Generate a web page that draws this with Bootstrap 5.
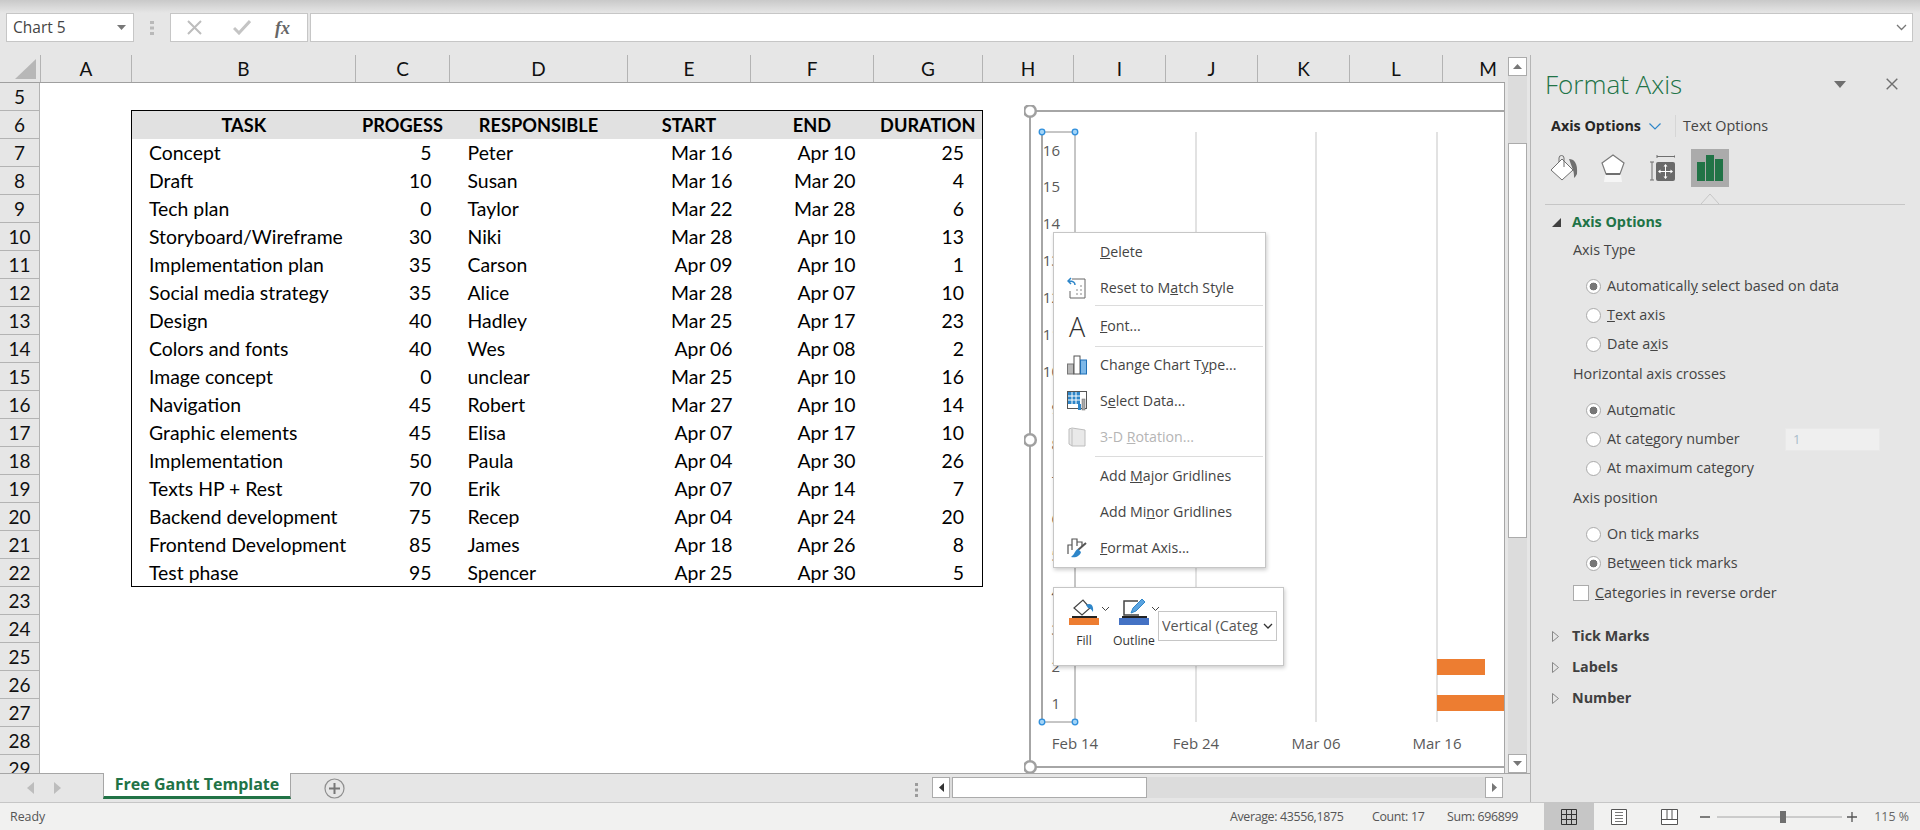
<!doctype html>
<html lang="en">
<head>
<meta charset="utf-8">
<title>Format Axis</title>
<link href="https://cdn.jsdelivr.net/npm/bootstrap@5.3.0/dist/css/bootstrap.min.css" rel="stylesheet">
<style>
html,body{height:830px;overflow:hidden}
body{background:#e6e6e6;font-family:"Open Sans","Liberation Sans",sans-serif;color:#444}
.xl-app{width:1920px;height:830px}
.xl-fbar{height:55px;background:linear-gradient(#c9c9c9 0,#e6e6e6 13px);flex:none;padding-top:13px}
.xl-name{width:128px;height:29px;margin-left:6px;background:#fff;border:1px solid #c6c6c6;padding:0 7px 0 6px;font-size:15.5px;color:#444}
.xl-dots{width:36px;height:29px;justify-content:center}
.xl-fxbox{width:138px;height:29px;margin-left:0;background:#fff;border:1px solid #c6c6c6}
.xl-fx{font:italic 700 18px "Liberation Serif",serif;color:#666;line-height:1}
.xl-input{width:1603px;height:29px;margin-left:2px;background:#fff;border:1px solid #c6c6c6;padding-right:5px}
.xl-sheetwrap{width:1531px;border-right:1px solid #b5b5b5;flex:none}
.xl-top{height:718px}
.xl-grid{width:1505px;flex:none}
.xl-cols{height:28px;border-bottom:1px solid #9f9f9f;flex:none;overflow:hidden;font:19px/27px Lato,sans-serif;color:#111}
.xl-col{flex:none;text-align:center;border-right:1px solid #b3b3b3}
.xl-corner{width:41px;flex:none;border-right:1px solid #b3b3b3;padding:4px 0 0 15px;line-height:0}
.xl-body{height:690px;overflow:hidden}
.xl-rows{width:40px;flex:none;border-right:1px solid #b3b3b3;font:19px/27px Lato,sans-serif;color:#111;text-align:center}
.xl-rows>div{height:28px;border-bottom:1px solid #b3b3b3}
.xl-canvas{flex:1 1 auto;background:#fff;padding:27px 0 0 91px;border-right:1px solid #a6a6a6;overflow:hidden}
.xl-gantt{width:851px;table-layout:fixed;border:1px solid #000;margin:0;--bs-table-bg:transparent}
.xl-gantt td,.xl-gantt th{height:28px;padding:0 18px;font:19.4px/27px Lato,sans-serif;color:#000;white-space:nowrap;border:0;vertical-align:middle}
.xl-gantt td:first-child{padding-left:17px}
.xl-gantt th{font-weight:700;font-size:18.2px;line-height:25px;background:#e1e1e1;padding:2px 0 0;text-align:center}
.xl-chart{position:absolute;left:984px;top:22px;width:480px;height:668px;background:#fff;display:block}
.xl-chart text{font-family:"Open Sans",sans-serif;font-size:15px;fill:#595959}
.xl-menu{left:1013px;top:149px;width:213px;padding:1px 0;border-radius:0;border:1px solid #c6c6c6;box-shadow:1px 2px 4px rgba(0,0,0,.2);font-size:14.2px;margin:0;--bs-dropdown-min-width:0}
.xl-item{height:36px;padding:0;color:#444;display:flex;align-items:center}
.xl-item.xl-short{height:35px}
.xl-item.xl-tall{height:40px}
.xl-item.disabled{color:#b5b5b5}
.xl-mi{width:46px;flex:none;display:flex;justify-content:center;align-items:center;height:100%}
.xl-a{font-size:27px;font-weight:300;line-height:1;color:#333}
.xl-sep{height:1px;margin:0 2px 0 41px;background:#dcdcdc}
.xl-mini{position:absolute;left:1013px;top:504px;width:231px;height:79px;background:#fff;border:1px solid #c6c6c6;box-shadow:1px 2px 4px rgba(0,0,0,.2);padding:10px 0 0 15px;font-size:12.2px;color:#333}
.xl-mb{width:50px;flex:none}
.xl-mb span{display:flex;justify-content:center;width:30px;margin-top:7px;white-space:nowrap}
.xl-select{width:119px;height:30px;border:1px solid #c6c6c6;margin:13px 0 0 -11px;padding:0 3px;font-size:14.4px;color:#555;white-space:nowrap}
.xl-select span{width:97px;overflow:hidden;flex:none}
.xl-vs{width:19px;margin:2px 0 0 3px;background:#dcdcdc}
.xl-sb{background:#fff;border:1px solid #ababab;flex:none}
.xl-strip{height:29px;border-top:1px solid #a6a6a6;flex:none}
.xl-nav{width:103px;flex:none;padding-left:27px;gap:20px}
.xl-tab{width:188px;height:26px;margin-top:-1px;background:#fff;border:1px solid #a6a6a6;border-top:0;border-bottom:3px solid #217346;flex:none;color:#217346;font-weight:700;font-size:16px;text-align:center;line-height:23px}
.xl-hs{width:571px;height:21px;margin:3px 0 0 13px;background:#dcdcdc;flex:none}
.xl-pane{flex:1 1 auto;padding-left:14px;font-size:14.35px;color:#444}
.xl-title{height:40px;margin-top:9px;font-size:26px;font-weight:300;color:#217346;line-height:40px;padding-right:22px}
.xl-tabs{height:24px;margin-top:10px;padding-left:6px;line-height:24px}
.xl-tabsep{width:1px;height:22px;background:#d6d6d6;margin:0 7px 0 14px}
.xl-icons{height:38px;margin-top:11px}
.xl-ic{width:38px;height:38px;display:flex;align-items:center;justify-content:center;flex:none;margin-right:11px}
.xl-ic:nth-child(3){margin-right:10px}
.xl-ic.xl-on{background:#ababab}
.xl-rule{position:relative;width:360px;height:1px;background:#c6c6c6;margin-top:17px}
.xl-notch{position:absolute;left:156px;top:-11px;line-height:0}
.xl-lab{height:24px;line-height:24px;margin-left:28px;white-space:nowrap}
.xl-head{height:24px;line-height:24px;font-weight:700;white-space:nowrap;color:#404040}
.xl-head svg{margin:0 11px 0 7px;flex:none}
.xl-green{color:#217346}
.xl-radio{height:29px;margin:0 0 0 41px;padding:0;display:flex;align-items:center;white-space:nowrap}
.xl-radio .form-check-input{width:15px;height:15px;margin:0 6px 0 0;float:none;border:1px solid #aaa;background-color:#fff;flex:none;opacity:1}
.xl-radio .form-check-input:checked{background-color:#fff;border-color:#aaa;background-image:radial-gradient(circle,#777 0 3.6px,transparent 4.2px)}
.xl-num{width:95px;height:23px;background:#efefef;border:1px solid #e9e9e9;color:#a9bccb;font-size:13px;padding-left:7px;line-height:21px;margin-left:37px}
.xl-cb{height:24px;margin-left:28px;display:flex;align-items:center;white-space:nowrap}
.xl-box{width:16px;height:16px;background:#fff;border:1px solid #ababab;margin-right:6px;flex:none}
.xl-status{height:28px;background:#f1f1f0;border-top:1px solid #c6c6c6;flex:none;font-size:12.4px;color:#555;line-height:27px;padding:0 11px 0 10px;white-space:nowrap}
.xl-stat{flex:none;letter-spacing:-.35px}
.xl-sview{width:50px;height:27px;display:flex;align-items:center;justify-content:center;flex:none}
.xl-sview.xl-on{background:#c6c6c6}
</style>
</head>
<body>
<div class="xl-app d-flex flex-column">

  <!-- formula bar -->
  <div class="xl-fbar d-flex">
    <div class="xl-name d-flex align-items-center justify-content-between">Chart 5
      <svg width="9" height="5" viewBox="0 0 9 5"><path d="M0 0h9L4.500 5z" fill="#777"/></svg>
    </div>
    <div class="xl-dots d-flex align-items-center">
      <svg width="4" height="14" viewBox="0 0 4 14"><path d="M0 0h4v3H0zM0 5.500h4v3H0zM0 11h4v3H0z" fill="#b9b9b9"/></svg>
    </div>
    <div class="xl-fxbox d-flex align-items-center">
      <svg class="ms-3" width="15" height="15" viewBox="0 0 15 15"><path d="M1 1l13 13M14 1L1 14" stroke="#bdbdbd" stroke-width="2" fill="none"/></svg>
      <svg style="margin-left:31px" width="18" height="15" viewBox="0 0 18 15"><path d="M1 8l5 5L17 1" stroke="#c4c4c4" stroke-width="3" fill="none"/></svg>
      <span class="xl-fx" style="margin-left:24px">fx</span>
    </div>
    <div class="xl-input d-flex align-items-center justify-content-end">
      <svg width="11" height="7" viewBox="0 0 11 7"><path d="M1 1l4.500 4.500L10 1" stroke="#777" stroke-width="1.300" fill="none"/></svg>
    </div>
  </div>

  <!-- main -->
  <div class="d-flex flex-grow-1" style="height:747px">
    <div class="xl-sheetwrap d-flex flex-column">
      <div class="xl-top d-flex">
        <div class="xl-grid d-flex flex-column">
          <div class="xl-cols d-flex">
            <div class="xl-corner"><svg width="21" height="20" viewBox="0 0 21 20"><path d="M0 20L21 0v20z" fill="#b7b7b7"/></svg></div>
            <div class="xl-col" style="width:91px">A</div>
            <div class="xl-col" style="width:224px">B</div>
            <div class="xl-col" style="width:94px">C</div>
            <div class="xl-col" style="width:178px">D</div>
            <div class="xl-col" style="width:123px">E</div>
            <div class="xl-col" style="width:123px">F</div>
            <div class="xl-col" style="width:109px">G</div>
            <div class="xl-col" style="width:91px">H</div>
            <div class="xl-col" style="width:92px">I</div>
            <div class="xl-col" style="width:92px">J</div>
            <div class="xl-col" style="width:92px">K</div>
            <div class="xl-col" style="width:93px">L</div>
            <div class="xl-col" style="width:90px;border:0">M</div>
          </div>
          <div class="xl-body d-flex">
            <div class="xl-rows">
              <div>5</div><div>6</div><div>7</div><div>8</div><div>9</div><div>10</div><div>11</div><div>12</div><div>13</div><div>14</div><div>15</div><div>16</div><div>17</div><div>18</div><div>19</div><div>20</div><div>21</div><div>22</div><div>23</div><div>24</div><div>25</div><div>26</div><div>27</div><div>28</div><div>29</div>
            </div>
            <div class="xl-canvas position-relative">
              <table class="table table-borderless xl-gantt">
                <colgroup><col style="width:224px"><col style="width:94px"><col style="width:178px"><col style="width:123px"><col style="width:123px"><col style="width:109px"></colgroup>
                <thead><tr><th>TASK</th><th>PROGESS</th><th>RESPONSIBLE</th><th>START</th><th>END</th><th>DURATION</th></tr></thead>
                <tbody>
                  <tr><td>Concept</td><td class="text-end">5</td><td>Peter</td><td class="text-end">Mar 16</td><td class="text-end">Apr 10</td><td class="text-end">25</td></tr>
                  <tr><td>Draft</td><td class="text-end">10</td><td>Susan</td><td class="text-end">Mar 16</td><td class="text-end">Mar 20</td><td class="text-end">4</td></tr>
                  <tr><td>Tech plan</td><td class="text-end">0</td><td>Taylor</td><td class="text-end">Mar 22</td><td class="text-end">Mar 28</td><td class="text-end">6</td></tr>
                  <tr><td>Storyboard/Wireframe</td><td class="text-end">30</td><td>Niki</td><td class="text-end">Mar 28</td><td class="text-end">Apr 10</td><td class="text-end">13</td></tr>
                  <tr><td>Implementation plan</td><td class="text-end">35</td><td>Carson</td><td class="text-end">Apr 09</td><td class="text-end">Apr 10</td><td class="text-end">1</td></tr>
                  <tr><td>Social media strategy</td><td class="text-end">35</td><td>Alice</td><td class="text-end">Mar 28</td><td class="text-end">Apr 07</td><td class="text-end">10</td></tr>
                  <tr><td>Design</td><td class="text-end">40</td><td>Hadley</td><td class="text-end">Mar 25</td><td class="text-end">Apr 17</td><td class="text-end">23</td></tr>
                  <tr><td>Colors and fonts</td><td class="text-end">40</td><td>Wes</td><td class="text-end">Apr 06</td><td class="text-end">Apr 08</td><td class="text-end">2</td></tr>
                  <tr><td>Image concept</td><td class="text-end">0</td><td>unclear</td><td class="text-end">Mar 25</td><td class="text-end">Apr 10</td><td class="text-end">16</td></tr>
                  <tr><td>Navigation</td><td class="text-end">45</td><td>Robert</td><td class="text-end">Mar 27</td><td class="text-end">Apr 10</td><td class="text-end">14</td></tr>
                  <tr><td>Graphic elements</td><td class="text-end">45</td><td>Elisa</td><td class="text-end">Apr 07</td><td class="text-end">Apr 17</td><td class="text-end">10</td></tr>
                  <tr><td>Implementation</td><td class="text-end">50</td><td>Paula</td><td class="text-end">Apr 04</td><td class="text-end">Apr 30</td><td class="text-end">26</td></tr>
                  <tr><td>Texts HP + Rest</td><td class="text-end">70</td><td>Erik</td><td class="text-end">Apr 07</td><td class="text-end">Apr 14</td><td class="text-end">7</td></tr>
                  <tr><td>Backend development</td><td class="text-end">75</td><td>Recep</td><td class="text-end">Apr 04</td><td class="text-end">Apr 24</td><td class="text-end">20</td></tr>
                  <tr><td>Frontend Development</td><td class="text-end">85</td><td>James</td><td class="text-end">Apr 18</td><td class="text-end">Apr 26</td><td class="text-end">8</td></tr>
                  <tr><td>Test phase</td><td class="text-end">95</td><td>Spencer</td><td class="text-end">Apr 25</td><td class="text-end">Apr 30</td><td class="text-end">5</td></tr>
                </tbody>
              </table>

              <!-- floating chart -->
              <svg class="xl-chart" viewBox="1024 105 480 668" aria-label="Gantt chart">
                <path d="M1196 132V722M1316 132V722M1437 132V722" stroke="#d9d9d9" stroke-width="1.500" fill="none"/>
                <rect x="1437" y="659" width="48" height="16" fill="#ed7d31"/>
                <rect x="1437" y="695" width="67" height="16" fill="#ed7d31"/>
                <path d="M1504 111H1030V767H1504" stroke="#a6a6a6" stroke-width="2" fill="none"/>
                <path d="M1075 132V722M1042 132H1075M1042 722H1075" stroke="#8c8c8c" stroke-width="1" fill="none"/>
                <path d="M1042 132V722" stroke="#a6a6a6" stroke-width="2" fill="none"/>
                <g text-anchor="end">
                  <text x="1060" y="155.500">16</text><text x="1060" y="192">15</text><text x="1060" y="229">14</text><text x="1060" y="266">13</text><text x="1060" y="303">12</text><text x="1060" y="340">11</text><text x="1060" y="377">10</text><text x="1060" y="414">9</text><text x="1060" y="450">8</text><text x="1060" y="487">7</text><text x="1060" y="524">6</text><text x="1060" y="561">5</text><text x="1060" y="598">4</text><text x="1060" y="635">3</text><text x="1060" y="672">2</text><text x="1060" y="708.500">1</text>
                </g>
                <g text-anchor="middle">
                  <text x="1075" y="749">Feb 14</text><text x="1196" y="749">Feb 24</text><text x="1316" y="749">Mar 06</text><text x="1437" y="749">Mar 16</text>
                </g>
                <g fill="#a3d4f7" stroke="#2f8fdc" stroke-width="1.300">
                  <circle cx="1042" cy="132" r="2.800"/><circle cx="1075" cy="132" r="2.800"/><circle cx="1042" cy="722" r="2.800"/><circle cx="1075" cy="722" r="2.800"/>
                </g>
                <g fill="#fff" stroke="#a0a0a0" stroke-width="2.500">
                  <circle cx="1030" cy="111" r="5.800"/><circle cx="1030" cy="440" r="5.800"/><circle cx="1030" cy="767" r="5.800"/>
                </g>
              </svg>

              <!-- context menu -->
              <div class="dropdown-menu show xl-menu">
                <a class="dropdown-item xl-item" href="#"><span class="xl-mi"></span><span><u>D</u>elete</span></a>
                <a class="dropdown-item xl-item xl-short" href="#"><span class="xl-mi">
                  <svg width="20" height="22" viewBox="0 0 20 22"><path d="M5 2h13v19H3v-7" fill="#fff" stroke="#666"/><path d="M9 13h2M13 13h2M9 17h2M13 9h2M13 17h2" stroke="#888"/><path d="M8 8c0-3-2-4-6-4M4 1L1 4l3 3" stroke="#2e86c9" stroke-width="1.500" fill="none"/></svg></span><span>Reset to M<u>a</u>tch Style</span></a>
                <div class="xl-sep"></div>
                <a class="dropdown-item xl-item xl-tall" href="#"><span class="xl-mi"><span class="xl-a">A</span></span><span><u>F</u>ont...</span></a>
                <div class="xl-sep"></div>
                <a class="dropdown-item xl-item" href="#"><span class="xl-mi">
                  <svg width="20" height="20" viewBox="0 0 20 20"><rect x=".5" y="9" width="6" height="10" fill="#b8b8b8" stroke="#777"/><rect x="7" y="1" width="6" height="18" fill="#fff" stroke="#555"/><rect x="13.500" y="5" width="6" height="14" fill="#7db8e8" stroke="#1f6fb5"/></svg></span><span>Change Chart T<u>y</u>pe...</span></a>
                <a class="dropdown-item xl-item" href="#"><span class="xl-mi">
                  <svg width="20" height="20" viewBox="0 0 20 20"><rect x=".5" y=".5" width="19" height="17" fill="#fff" stroke="#555"/><path d="M1 1h12v12H1z" fill="#2e86c9"/><path d="M1 5h12M1 9h12M5 1v12M9 1v12" stroke="#fff"/><rect x="11" y="13" width="3" height="6" fill="#2e86c9"/><rect x="15" y="8" width="3" height="11" fill="#aaa" stroke="#666" stroke-width=".5"/></svg></span><span>S<u>e</u>lect Data...</span></a>
                <a class="dropdown-item xl-item disabled" href="#"><span class="xl-mi">
                  <svg width="18" height="20" viewBox="0 0 18 20"><path d="M1 2l3-1 13 2v16H4l-3-2z" fill="#e9e9e9" stroke="#bdbdbd"/><path d="M4 2v17" stroke="#bdbdbd"/></svg></span><span>3-D <u>R</u>otation...</span></a>
                <div class="xl-sep" style="margin-top:1px;margin-bottom:1px"></div>
                <a class="dropdown-item xl-item" href="#"><span class="xl-mi"></span><span>Add <u>M</u>ajor Gridlines</span></a>
                <a class="dropdown-item xl-item" href="#"><span class="xl-mi"></span><span>Add Mi<u>n</u>or Gridlines</span></a>
                <a class="dropdown-item xl-item" href="#"><span class="xl-mi">
                  <svg width="20" height="20" viewBox="0 0 20 20"><path d="M1 16V7h4M5 12V1h5v7M10 4h5v4" fill="none" stroke="#555" stroke-width="1.200"/><path d="M19 5l-8 7" stroke="#555" stroke-width="2"/><path d="M11 11c-3 1-3 5-7 8 5 1 9-1 10-5z" fill="#2e86c9"/></svg></span><span><u>F</u>ormat Axis...</span></a>
              </div>

              <!-- mini toolbar -->
              <div class="xl-mini d-flex">
                <div class="xl-mb">
                  <svg width="42" height="27" viewBox="0 0 42 27"><path d="M5 10l9-8 7 8-8 7z" fill="#fff" stroke="#444" stroke-width="1.200"/><path d="M17 7c5-3 8 1 7 7-2-3-3-4-5-4z" fill="#2e86c9"/><path d="M3 19h25" stroke="#222" stroke-width="2"/><rect y="20" width="30" height="7" fill="#ed7d31"/><path d="M33 9l3.500 3.500L40 9" stroke="#444" fill="none"/></svg>
                  <span>Fill</span>
                </div>
                <div class="xl-mb">
                  <svg width="42" height="27" viewBox="0 0 42 27"><path d="M19 3H5v14h15" fill="#fff" stroke="#444" stroke-width="1.500"/><path d="M12 15l2-5 9-9 3 3-9 9z" fill="#5aa3e0" stroke="#2e86c9"/><path d="M3 19h25" stroke="#222" stroke-width="2"/><rect y="20" width="30" height="7" fill="#4472c4"/><path d="M33 9l3.500 3.500L40 9" stroke="#444" fill="none"/></svg>
                  <span>Outline</span>
                </div>
                <div class="xl-select d-flex align-items-center justify-content-between"><span>Vertical (Categ</span>
                  <svg width="10" height="6" viewBox="0 0 10 6"><path d="M1 1l4 4 4-4" stroke="#333" stroke-width="1.300" fill="none"/></svg>
                </div>
              </div>
            </div>
          </div>
        </div>
        <!-- vertical scrollbar -->
        <div class="xl-vs d-flex flex-column">
          <div class="xl-sb d-flex align-items-center justify-content-center" style="height:19px"><svg width="9" height="5" viewBox="0 0 9 5"><path d="M0 5h9L4.500 0z" fill="#777"/></svg></div>
          <div style="height:67px"></div>
          <div class="xl-sb" style="height:395px"></div>
          <div class="flex-grow-1"></div>
          <div class="xl-sb d-flex align-items-center justify-content-center" style="height:19px"><svg width="9" height="5" viewBox="0 0 9 5"><path d="M0 0h9L4.500 5z" fill="#777"/></svg></div>
        </div>
      </div>
      <!-- sheet tabs -->
      <div class="xl-strip d-flex">
        <div class="xl-nav d-flex align-items-center">
          <svg width="7" height="12" viewBox="0 0 7 12"><path d="M7 0v12L0 6z" fill="#bdbdbd"/></svg>
          <svg width="7" height="12" viewBox="0 0 7 12"><path d="M0 0v12l7-6z" fill="#bdbdbd"/></svg>
        </div>
        <div class="xl-tab">Free Gantt Template</div>
        <svg style="margin:4px 0 0 33px;flex:none" width="21" height="21" viewBox="0 0 21 21"><circle cx="10.500" cy="10.500" r="9.500" fill="none" stroke="#8f8f8f" stroke-width="1.200"/><path d="M10.500 5v11M5 10.500h11" stroke="#777" stroke-width="2"/></svg>
        <svg style="margin:9px 0 0 570px;flex:none" width="4" height="14" viewBox="0 0 4 14"><path d="M0 0h3v3H0zM0 5.500h3v3H0zM0 11h3v3H0z" fill="#9c9c9c"/></svg>
        <div class="xl-hs d-flex">
          <div class="xl-sb d-flex align-items-center justify-content-center" style="width:18px"><svg width="5" height="9" viewBox="0 0 5 9"><path d="M5 0v9L0 4.500z" fill="#333"/></svg></div>
          <div class="xl-sb" style="width:195px;margin-left:2px"></div>
          <div class="flex-grow-1"></div>
          <div class="xl-sb d-flex align-items-center justify-content-center" style="width:18px"><svg width="5" height="9" viewBox="0 0 5 9"><path d="M0 0v9l5-4.500z" fill="#777"/></svg></div>
        </div>
      </div>
    </div>

    <!-- format pane -->
    <aside class="xl-pane">
      <div class="xl-title d-flex justify-content-between align-items-center"><span>Format Axis</span>
        <span class="d-flex align-items-center" style="gap:40px">
          <svg width="12" height="7" viewBox="0 0 12 7"><path d="M0 0h12L6 7z" fill="#6f6f6f"/></svg>
          <svg width="12" height="12" viewBox="0 0 12 12"><path d="M.7.7l10.600 10.600M11.300.7L.7 11.300" stroke="#6f6f6f" stroke-width="1.400"/></svg>
        </span>
      </div>
      <div class="xl-tabs d-flex align-items-center">
        <strong class="text-nowrap" style="color:#262626">Axis Options</strong>
        <svg class="ms-2" width="12" height="7" viewBox="0 0 12 7" style="margin-left:9px"><path d="M.5.5L6 6l5.500-5.500" stroke="#2e86c9" stroke-width="1.200" fill="none"/></svg>
        <span class="xl-tabsep"></span><span class="text-nowrap">Text Options</span>
      </div>
      <div class="xl-icons d-flex">
        <div class="xl-ic">
          <svg width="28" height="26" viewBox="0 0 28 26"><path d="M1 15L12 4l11 11-11 10z" fill="#fff" stroke="#6f6f6f"/><path d="M9 7V3a2.500 2.500 0 015 0v9" fill="none" stroke="#6f6f6f"/><path d="M19 4c5 0 9 4 8 15-1 2-2 3-3 4 0-3 0-5-1-8z" fill="#6f6f6f"/></svg>
        </div>
        <div class="xl-ic">
          <svg width="24" height="28" viewBox="0 0 24 28"><path d="M12 1l11 8-4 11H5L1 9z" fill="#fff" stroke="#7a7a7a" stroke-width="1.200"/><path d="M5 20h14" stroke="#6f6f6f" stroke-width="2"/><path d="M4 21h16l1 7H3z" fill="#f6f6f6"/></svg>
        </div>
        <div class="xl-ic">
          <svg width="26" height="28" viewBox="0 0 26 28"><path d="M8 1v3M26 1v3M8 2.500h18M1 8h4M1 26h4M3 8v18" fill="none" stroke="#6f6f6f"/><rect x="7" y="8" width="19" height="19" rx="2" fill="#6a6a6a"/><path d="M16.500 11v13M10 17.500h13" stroke="#fff"/><path d="M16.500 10l-2 2.500h4zM16.500 25l-2-2.500h4zM9 17.500l2.500-2v4zM24 17.500l-2.500-2v4z" fill="#fff"/></svg>
        </div>
        <div class="xl-ic xl-on">
          <svg width="26" height="26" viewBox="0 0 26 26"><path d="M0 7h8v19H0zM9 0h8v26H9zM18 4h8v22h-8z" fill="#217346"/></svg>
        </div>
      </div>
      <div class="xl-rule"><span class="xl-notch"><svg width="18" height="11" viewBox="0 0 18 11"><path d="M0 11L9 1l9 10" fill="#e6e6e6" stroke="#c6c6c6"/></svg></span></div>

      <div class="xl-head xl-green d-flex align-items-center" style="margin-top:5px"><svg width="9" height="9" viewBox="0 0 9 9"><path d="M9 0v9H0z" fill="#404040"/></svg>Axis Options</div>
      <div class="xl-lab" style="margin-top:4px">Axis Type</div>
      <div style="margin-top:9.500px">
        <div class="form-check xl-radio"><input class="form-check-input" type="radio" name="xlt" checked><span>Automaticall<u>y</u> select based on data</span></div>
        <div class="form-check xl-radio"><input class="form-check-input" type="radio" name="xlt"><span><u>T</u>ext axis</span></div>
        <div class="form-check xl-radio"><input class="form-check-input" type="radio" name="xlt"><span>Date a<u>x</u>is</span></div>
      </div>
      <div class="xl-lab" style="margin-top:3.500px">Horizontal axis crosses</div>
      <div style="margin-top:9.500px">
        <div class="form-check xl-radio"><input class="form-check-input" type="radio" name="xlh" checked><span>Aut<u>o</u>matic</span></div>
        <div class="form-check xl-radio"><input class="form-check-input" type="radio" name="xlh"><span style="width:141px">At cat<u>e</u>gory number</span><div class="xl-num">1</div></div>
        <div class="form-check xl-radio"><input class="form-check-input" type="radio" name="xlh"><span>At maximum cate<u>g</u>ory</span></div>
      </div>
      <div class="xl-lab" style="margin-top:3.500px">Axis position</div>
      <div style="margin-top:9.500px">
        <div class="form-check xl-radio"><input class="form-check-input" type="radio" name="xlp"><span>On tic<u>k</u> marks</span></div>
        <div class="form-check xl-radio"><input class="form-check-input" type="radio" name="xlp" checked><span>Bet<u>w</u>een tick marks</span></div>
      </div>
      <div class="xl-cb" style="margin-top:3.500px"><span class="xl-box"></span><span><u>C</u>ategories in reverse order</span></div>
      <div class="xl-head d-flex align-items-center" style="margin-top:19px"><svg width="7" height="11" viewBox="0 0 7 11"><path d="M.5.5v10l6-5z" fill="none" stroke="#888"/></svg><span style="margin-left:2px">Tick Marks</span></div>
      <div class="xl-head d-flex align-items-center" style="margin-top:7px"><svg width="7" height="11" viewBox="0 0 7 11"><path d="M.5.5v10l6-5z" fill="none" stroke="#888"/></svg><span style="margin-left:2px">Labels</span></div>
      <div class="xl-head d-flex align-items-center" style="margin-top:7px"><svg width="7" height="11" viewBox="0 0 7 11"><path d="M.5.5v10l6-5z" fill="none" stroke="#888"/></svg><span style="margin-left:2px">Number</span></div>
    </aside>
  </div>

  <!-- status bar -->
  <div class="xl-status d-flex">
    <span>Ready</span>
    <span class="xl-stat ms-auto" style="width:142px">Average: 43556,1875</span>
    <span class="xl-stat" style="width:75px">Count: 17</span>
    <span class="xl-stat" style="width:97px">Sum: 696899</span>
    <div class="xl-sview xl-on"><svg width="16" height="16" viewBox="0 0 16 16"><path d="M.5.500h15v15H.5zM.5 5.500h15M.5 10.500h15M5.500.5v15M10.500.5v15" fill="none" stroke="#333"/></svg></div>
    <div class="xl-sview"><svg width="16" height="16" viewBox="0 0 16 16"><path d="M.5.500h15v15H.5z" fill="#fff" stroke="#555"/><path d="M4 3.500h8M4 6.500h8M4 9.500h8M4 12.500h8" stroke="#777"/></svg></div>
    <div class="xl-sview"><svg width="17" height="16" viewBox="0 0 17 16"><path d="M.5.500h16v15H.5z" fill="#fff" stroke="#555"/><path d="M.5 10.500h16M6 .5v10M11 .5v10" stroke="#555" fill="none"/></svg></div>
    <div class="d-flex align-items-center" style="margin-left:6px;gap:7px">
      <svg width="10" height="2" viewBox="0 0 10 2"><path d="M0 1h10" stroke="#555" stroke-width="1.500"/></svg>
      <svg width="125" height="14" viewBox="0 0 125 14"><path d="M0 7h125" stroke="#a6a6a6"/><rect x="63" y="1" width="6" height="12" fill="#6f6f6f"/></svg>
      <svg style="margin-left:-2px" width="10" height="10" viewBox="0 0 10 10"><path d="M0 5h10M5 0v10" stroke="#555" stroke-width="1.300"/></svg>
    </div>
    <span style="width:52px;text-align:right;color:#666">115 %</span>
  </div>
</div>
</body>
</html>
